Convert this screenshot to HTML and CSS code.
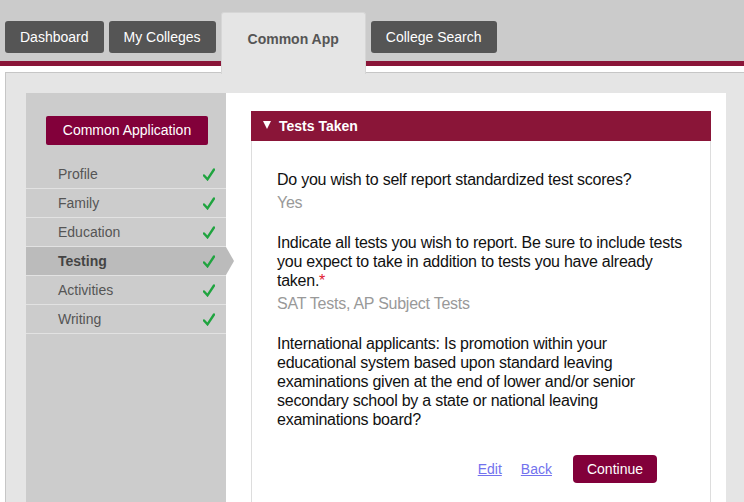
FILE: index.html
```html
<!DOCTYPE html>
<html lang="en">
<head>
    <meta charset="UTF-8">
    <meta name="viewport" content="width=device-width, initial-scale=1.0">
    <title>Common App - Testing</title>
    <link rel="stylesheet" href="styles.css">
</head>
<body>
    <div class="topbar">
        <nav class="tabs">
            <a class="tab" href="#">Dashboard</a>
            <a class="tab" href="#">My Colleges</a>
            <a class="tab active" href="#">Common App</a>
            <a class="tab" href="#">College Search</a>
        </nav>
    </div>

    <div class="page">
        <div class="panel">
            <aside class="sidebar">
                <a class="app-button" href="#">Common Application</a>
                <ul class="steps">
                    <li>Profile <svg class="check" viewBox="0 0 12 13"><path d="M1 7.5 L4.5 11.3 L11 1.5"/></svg></li>
                    <li>Family <svg class="check" viewBox="0 0 12 13"><path d="M1 7.5 L4.5 11.3 L11 1.5"/></svg></li>
                    <li>Education <svg class="check" viewBox="0 0 12 13"><path d="M1 7.5 L4.5 11.3 L11 1.5"/></svg></li>
                    <li class="current">Testing <svg class="check" viewBox="0 0 12 13"><path d="M1 7.5 L4.5 11.3 L11 1.5"/></svg></li>
                    <li>Activities <svg class="check" viewBox="0 0 12 13"><path d="M1 7.5 L4.5 11.3 L11 1.5"/></svg></li>
                    <li>Writing <svg class="check" viewBox="0 0 12 13"><path d="M1 7.5 L4.5 11.3 L11 1.5"/></svg></li>
                </ul>
            </aside>

            <main class="content">
                <section class="card">
                    <h2 class="card-title"><span class="caret"></span>Tests Taken</h2>
                    <div class="card-body">
                        <div class="question">
                            <p class="q">Do you wish to self report standardized test scores?</p>
                            <p class="answer">Yes</p>
                        </div>
                        <div class="question">
                            <p class="q">Indicate all tests you wish to report. Be sure to include tests you expect to take in addition to tests you have already taken.<span class="required">*</span></p>
                            <p class="answer">SAT Tests, AP Subject Tests</p>
                        </div>
                        <div class="question">
                            <p class="q">International applicants: Is promotion within your educational system based upon standard leaving examinations given at the end of lower and/or senior secondary school by a state or national leaving examinations board?</p>
                        </div>
                        <div class="actions">
                            <a href="#" class="link">Edit</a>
                            <a href="#" class="link">Back</a>
                            <button type="button" class="continue">Continue</button>
                        </div>
                    </div>
                </section>
            </main>
        </div>
    </div>
</body>
</html>
```

FILE: styles.css
```css
html, body {
    overflow: hidden;
}

body {
    font-family: Arial, "Liberation Sans", sans-serif;
    background-color: #fff;
    margin: 0;
    height: 502px;
}

/* top navigation */
.topbar {
    height: 61px;
    background: #cbcbcb;
    border-bottom: 5px solid #8a1538;
}

.tabs {
    display: flex;
    align-items: flex-start;
    padding: 21px 0 0 5px;
}

.tab {
    display: block;
    height: 32px;
    line-height: 33px;
    padding: 0 15px;
    margin-right: 4px;
    background: #555;
    color: #fff;
    font-size: 14px;
    text-decoration: none;
    border-radius: 3px;
}

.tab + .tab {
    margin-left: 1px;
}

.tab.active {
    position: relative;
    z-index: 2;
    margin-top: -9px;
    height: 61px;
    line-height: 52px;
    padding: 0 26px;
    background: #e5e5e5;
    color: #555;
    font-weight: bold;
    border: 1px solid #d6d6d6;
    border-bottom: none;
    border-radius: 3px 3px 0 0;
}

/* main panel */
.page {
    padding: 6px 0 0 5px;
}

.panel {
    display: flex;
    min-height: 409px;
    background: #e5e5e5;
    border: 1px solid #c6c6c6;
    border-right: none;
    border-bottom: none;
    padding: 20px 18px 0 20px;
}

.sidebar {
    width: 200px;
    flex-shrink: 0;
    background: #cccccc;
    padding-top: 23px;
}

.app-button {
    display: block;
    width: 162px;
    height: 29px;
    line-height: 29px;
    margin: 0 0 15px 20px;
    background: #82003a;
    color: #fff;
    font-size: 14px;
    text-align: center;
    text-decoration: none;
    border-radius: 2px;
}

.steps {
    list-style: none;
    margin: 0;
    padding: 0;
}

.steps li {
    position: relative;
    display: flex;
    justify-content: space-between;
    align-items: center;
    height: 28px;
    padding: 0 11px 0 32px;
    border-bottom: 1px solid #e2e2e2;
    color: #555;
    font-size: 14px;
}

.steps li.current {
    background: #bbbbbb;
    font-weight: bold;
    color: #444;
}

.steps li.current::after {
    content: "";
    position: absolute;
    right: -8px;
    top: 0;
    border-left: 8px solid #bbbbbb;
    border-top: 14px solid transparent;
    border-bottom: 14px solid transparent;
}

.check {
    width: 12px;
    height: 13px;
    fill: none;
    stroke: #1fa43f;
    stroke-width: 2.4;
    stroke-linecap: round;
}

/* form card */
.content {
    flex: 1;
    background: #fff;
    padding: 18px 15px 0 25px;
}

.card-title {
    margin: 0;
    height: 30px;
    line-height: 30px;
    padding-left: 12px;
    background: #8a1538;
    color: #fff;
    font-size: 14px;
    font-weight: bold;
}

.caret {
    display: inline-block;
    vertical-align: 2px;
    margin-right: 8px;
    border-top: 8px solid #fff;
    border-left: 4.5px solid transparent;
    border-right: 4.5px solid transparent;
}

.card-body {
    border-left: 1px solid #ddd;
    border-right: 1px solid #ddd;
    padding: 29px 25px 19px 25px;
}

.question {
    margin-bottom: 21px;
}

.question p {
    margin: 0;
    font-size: 16px;
    line-height: 19px;
    letter-spacing: -0.25px;
}

.q {
    color: #111;
}

.answer {
    margin-top: 4px !important;
    color: #999;
}

.required {
    color: #e2202f;
}

.actions {
    display: flex;
    justify-content: flex-end;
    align-items: center;
    gap: 19px;
    margin: 26px 28px 0 0;
}

.link {
    color: #7272ee;
    font-size: 14px;
}

.continue {
    height: 28px;
    padding: 0 14px;
    margin-left: 2px;
    background: #82003a;
    color: #fff;
    border: none;
    border-radius: 4px;
    font-family: Arial, "Liberation Sans", sans-serif;
    font-size: 14px;
    cursor: pointer;
}
```
